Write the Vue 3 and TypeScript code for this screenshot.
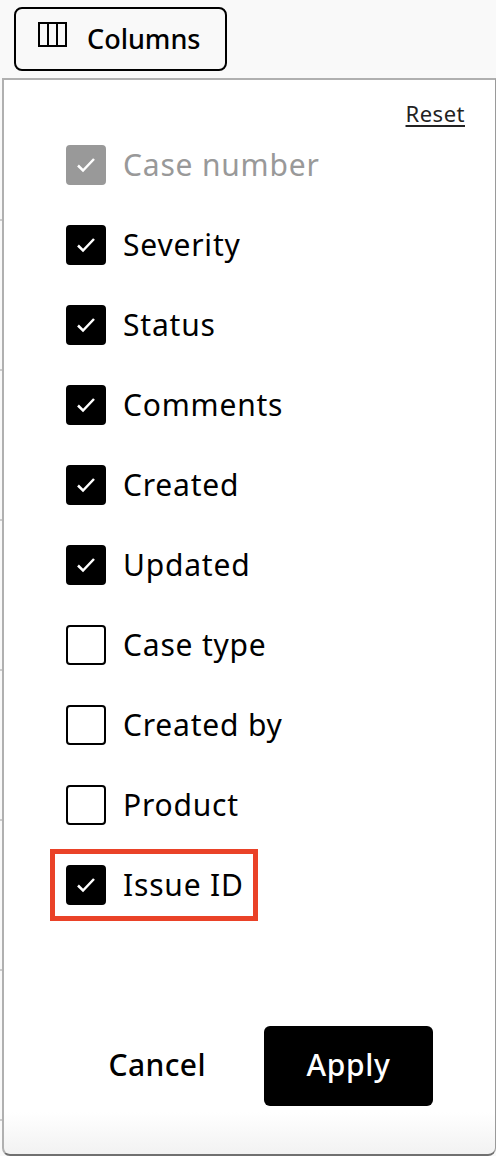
<script setup lang="ts">
interface Col { label: string; checked: boolean; disabled?: boolean; marked?: boolean }
const cols: Col[] = [
  { label: 'Case number', checked: true, disabled: true },
  { label: 'Severity', checked: true },
  { label: 'Status', checked: true },
  { label: 'Comments', checked: true },
  { label: 'Created', checked: true },
  { label: 'Updated', checked: true },
  { label: 'Case type', checked: false },
  { label: 'Created by', checked: false },
  { label: 'Product', checked: false },
  { label: 'Issue ID', checked: true, marked: true },
]
const ticks = [0, 1, 2, 3, 4, 5, 6]
</script>

<template>
  <div class="page">
    <div class="toolbar">
      <button class="columns-btn" type="button">
        <svg class="col-icon" width="30" height="26" viewBox="0 0 30 26" fill="none" stroke="#000" stroke-width="2">
          <rect x="1" y="1" width="27" height="23" />
          <path d="M10 1v23M19 1v23" />
        </svg>
        <span>Columns</span>
      </button>
    </div>
    <div class="rows-edge">
      <i v-for="t in ticks" :key="t" class="tick"></i>
    </div>
    <div class="popup">
      <div class="reset-row"><a class="reset">Reset</a></div>
      <ul class="list">
        <li v-for="c in cols" :key="c.label" class="item" :class="{ disabled: c.disabled, marked: c.marked }">
          <span class="box" :class="{ on: c.checked }">
            <svg v-if="c.checked" width="20" height="16" viewBox="0 0 20 16" fill="none" stroke="#fff" stroke-width="2.5">
              <path d="M2 8.5l5 5L18 2" />
            </svg>
          </span>
          <span class="label">{{ c.label }}</span>
        </li>
      </ul>
      <div class="actions">
        <button class="cancel" type="button">Cancel</button>
        <button class="apply" type="button">Apply</button>
      </div>
    </div>
  </div>
</template>

<style>
html, body { margin: 0; background: #f9f9f9; }
</style>

<style scoped>
.page {
  position: relative;
  width: 496px;
  height: 1156px;
  overflow: hidden;
  background: #f9f9f9;
  font-family: "Noto Sans", sans-serif;
  color: #000;
}
.toolbar { height: 78px; box-sizing: border-box; padding: 7px 0 0 14px; }
.columns-btn {
  display: flex;
  align-items: center;
  gap: 19px;
  width: 213px;
  height: 64px;
  box-sizing: border-box;
  padding: 0 0 2px 22px;
  background: #f9f9f9;
  border: 2px solid #000;
  border-radius: 8px;
  font: 500 27px "Noto Sans", sans-serif;
  color: #000;
}
.col-icon { margin-top: -6px; }
.rows-edge {
  position: absolute;
  left: 0;
  top: 219px;
  width: 3px;
  display: flex;
  flex-direction: column;
  gap: 148px;
}
.tick { display: block; height: 2px; background: #ccc; }
.popup {
  position: absolute;
  left: 2px;
  top: 78px;
  width: 494px;
  height: 1078px;
  box-sizing: border-box;
  background: linear-gradient(#fff 0, #fff 1032px, #f2f2f2 100%);
  border: 2px solid #b0b0b0;
  border-right: 1px solid #9a9a9a;
  border-bottom-color: #707070;
  border-radius: 0 0 8px 8px;
}
.reset-row { display: flex; justify-content: flex-end; padding: 20px 30px 0 0; height: 45px; box-sizing: border-box; }
.reset {
  font-size: 22px;
  line-height: 26px;
  letter-spacing: 0.5px;
  color: #222;
  text-decoration: underline;
  text-underline-offset: 3px;
}
.list { list-style: none; margin: 0; padding: 0 0 0 62px; }
.item {
  position: relative;
  display: flex;
  align-items: center;
  gap: 17px;
  height: 80px;
  font-size: 30px;
  letter-spacing: 0.8px;
}
.label { margin-top: -2px; }
.item.disabled { color: #999; }
.box {
  width: 40px;
  height: 40px;
  box-sizing: border-box;
  display: flex;
  align-items: center;
  justify-content: center;
  border: 2px solid #000;
  border-radius: 4px;
  background: #fff;
}
.box.on { background: #000; }
.disabled .box { background: #999; border-color: #999; }
.marked::after {
  content: "";
  position: absolute;
  left: -16px;
  top: 4px;
  width: 208px;
  height: 72px;
  box-sizing: border-box;
  border: 5px solid #ea4228;
  pointer-events: none;
}
.actions {
  position: absolute;
  right: 62px;
  top: 946px;
  display: flex;
  align-items: center;
  gap: 58px;
}
.cancel, .apply {
  border: 0;
  padding: 0 0 3px;
  font: 500 30px "Noto Sans", sans-serif;
  letter-spacing: 0.4px;
}
.cancel { background: none; color: #000; }
.apply {
  width: 169px;
  height: 80px;
  background: #000;
  color: #fff;
  border-radius: 6px;
  letter-spacing: 0.6px;
}
</style>
